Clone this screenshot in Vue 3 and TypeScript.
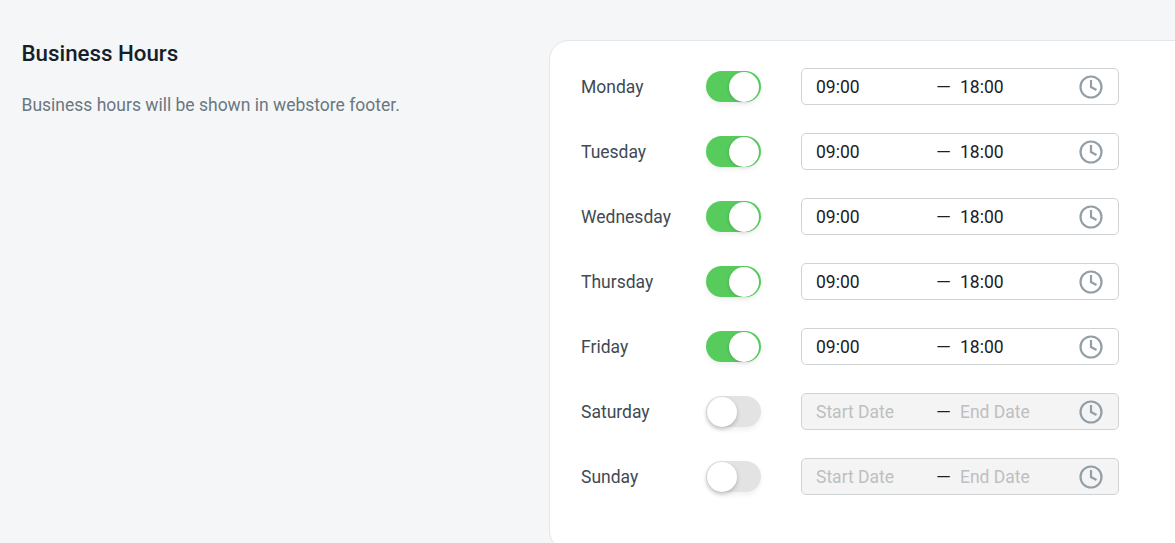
<template>
  <div class="page">
    <div class="intro">
      <h2 class="title">Business Hours</h2>
      <p class="desc">Business hours will be shown in webstore footer.</p>
    </div>
    <div class="card">
      <div v-for="day in days" :key="day.name" class="row">
        <span class="day">{{ day.name }}</span>
        <span class="toggle" :class="{ on: day.open }"><span class="knob"></span></span>
        <div class="range" :class="{ disabled: !day.open }">
          <span class="start">{{ day.open ? '09:00' : 'Start Date' }}</span>
          <span class="dash">—</span>
          <span class="end">{{ day.open ? '18:00' : 'End Date' }}</span>
          <svg class="clock" width="24" height="24" viewBox="0 0 24 24" fill="none">
            <circle cx="12" cy="12" r="10.5" />
            <path d="M12 5v7l5.5 3" />
          </svg>
        </div>
      </div>
    </div>
  </div>
</template>

<script setup lang="ts">
interface Day {
  name: string
  open: boolean
}

const days: Day[] = [
  { name: 'Monday', open: true },
  { name: 'Tuesday', open: true },
  { name: 'Wednesday', open: true },
  { name: 'Thursday', open: true },
  { name: 'Friday', open: true },
  { name: 'Saturday', open: false },
  { name: 'Sunday', open: false }
]
</script>

<style>
html,
body {
  margin: 0;
  background: #f5f6f8;
}
</style>

<style scoped>
.page {
  display: flex;
  height: 543px;
  overflow: hidden;
  padding-top: 40px;
  box-sizing: border-box;
  font-family: Roboto, "Liberation Sans", sans-serif;
  background: #f5f6f8;
}

.intro {
  flex: 0 0 549px;
  padding-left: 21.5px;
  box-sizing: border-box;
}

.title {
  margin: 0;
  font-size: 22.3px;
  line-height: 27px;
  font-weight: 500;
  color: #14212b;
}

.desc {
  margin: 24px 0 0;
  font-size: 17.5px;
  line-height: 28px;
  color: #6b7780;
}

.card {
  flex: 0 0 700px;
  height: 511px;
  box-sizing: border-box;
  padding: 27px 0 0 31px;
  background: #fff;
  border: 1px solid #e4e6e8;
  border-radius: 20px;
  display: flex;
  flex-direction: column;
  gap: 28px;
}

.row {
  display: flex;
  align-items: center;
  height: 37px;
}

.day {
  width: 125px;
  font-size: 17.5px;
  color: #3f4a54;
}

.toggle {
  flex: none;
  width: 55px;
  height: 31px;
  margin-right: 40px;
  padding: 0.5px 1px;
  box-sizing: border-box;
  border-radius: 16px;
  background: #e3e3e3;
  display: flex;
  box-shadow: 0 3px 5px rgba(0, 0, 0, 0.06);
}

.toggle.on {
  background: #57cc5d;
  justify-content: flex-end;
  padding-right: 2px;
}

.knob {
  width: 30px;
  height: 30px;
  border-radius: 50%;
  background: #fff;
  box-shadow: 0 2px 4px rgba(0, 0, 0, 0.22);
}

.toggle.on .knob {
  box-shadow: -1px 1px 3px rgba(0, 0, 0, 0.12);
}

.range {
  flex: none;
  width: 318px;
  height: 37px;
  box-sizing: border-box;
  border: 1px solid #d0d3d6;
  border-radius: 5px;
  padding-left: 14px;
  display: flex;
  align-items: center;
  font-size: 17.5px;
  color: #1b2026;
  background: #fff;
}

.range.disabled {
  background: #f4f4f4;
  color: #bdbfc2;
}

.start {
  width: 120px;
}

.dash {
  width: 24px;
  color: #1b2026;
  font-size: 19px;
}

.end {
  width: 105px;
}

.clock {
  flex: none;
  margin-left: 14px;
  stroke: #939fa7;
  stroke-width: 2.2;
}
</style>
